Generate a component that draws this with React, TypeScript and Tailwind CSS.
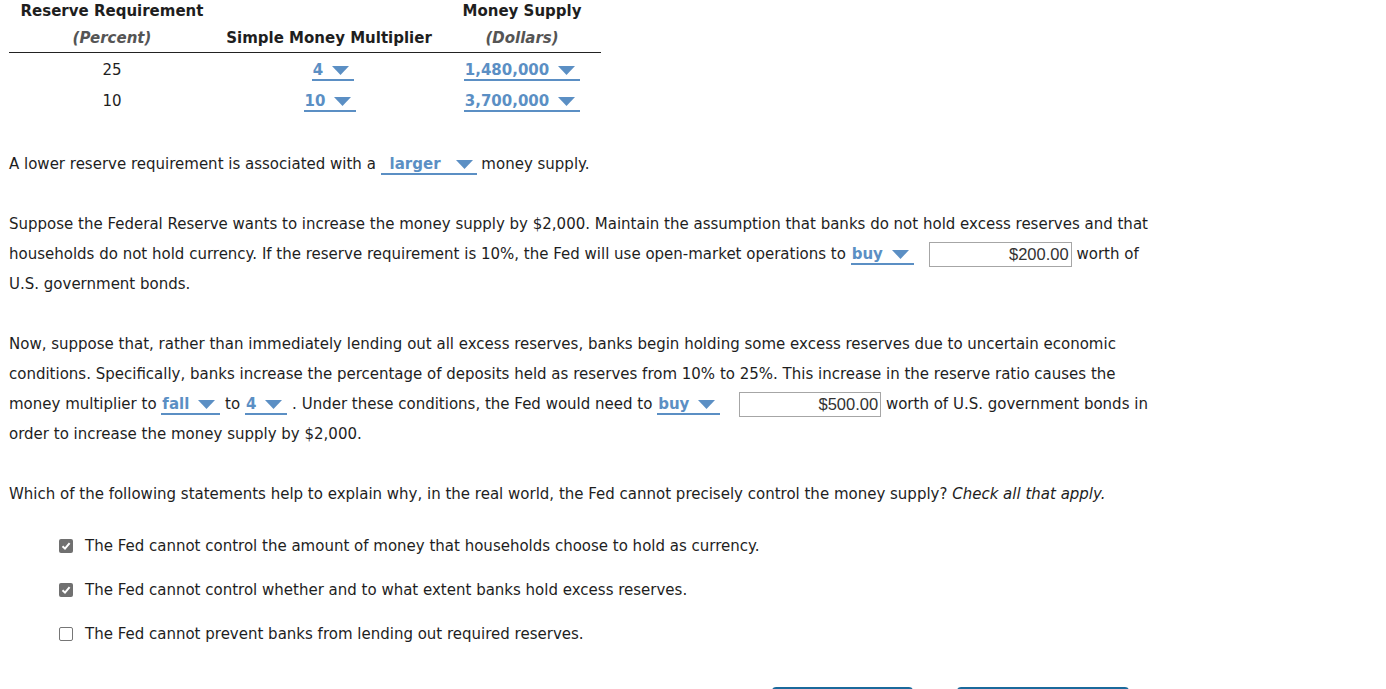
import React from "react";

const Tri = () => (
  <svg width="17" height="9" viewBox="0 0 17 9" className="inline-block">
    <polygon points="0,0 17,0 8.5,9" fill="#5b8fc4" />
  </svg>
);

function DD({ text, pl = "pl-[1px]", gap = "gap-[9px]", pr = "pr-[5px]" }: { text: string; pl?: string; gap?: string; pr?: string }) {
  return (
    <span
      className={`inline-flex items-center ${gap} ${pl} ${pr} border-b-2 border-[#5b8fc4] font-bold text-[#5b8fc4] leading-[18px] align-baseline`}
    >
      <span>{text}</span>
      <Tri />
    </span>
  );
}

function Box({ value, w }: { value: string; w: string }) {
  return (
    <span
      className={`inline-block ${w} h-[25px] border border-[#a6a6a6] text-right pr-[2px] leading-[23px] align-middle text-[#333] text-[16.5px]`}
      style={{ fontFamily: '"Liberation Sans", Arial, sans-serif' }}
    >
      {value}
    </span>
  );
}

function Check({ checked, label }: { checked: boolean; label: string }) {
  return (
    <div className="h-[44px] flex items-center pl-[50px]">
      {checked ? (
        <span className="w-[14px] h-[14px] rounded-[2px] bg-[#707070] flex items-center justify-center">
          <svg width="10" height="10" viewBox="0 0 10 10">
            <path d="M1.5 5.2 L4 7.6 L8.6 2.2" stroke="white" strokeWidth="2" fill="none" />
          </svg>
        </span>
      ) : (
        <span className="w-[14px] h-[14px] rounded-[2px] border border-[#767676] bg-white" />
      )}
      <span className="ml-[12px]">{label}</span>
    </div>
  );
}

export default function App() {
  return (
    <div
      className="w-[1386px] h-[689px] overflow-hidden bg-white text-[#1e1e1e] text-[15px] pl-[9px]"
      style={{ fontFamily: '"DejaVu Sans", Verdana, sans-serif' }}
    >
      {/* Table */}
      <div className="w-[592px]">
        <div className="grid grid-cols-[206px_228px_158px] font-bold pt-[1px]">
          <div className="h-[21px] leading-[21px] text-center">Reserve Requirement</div>
          <div />
          <div className="h-[21px] leading-[21px] text-center">Money Supply</div>
        </div>
        <div className="grid grid-cols-[206px_228px_158px] border-b border-[#222] h-[31px] items-center pt-[2px]">
          <div className="text-center italic font-bold text-[#555]">(Percent)</div>
          <div className="text-center font-bold">Simple Money Multiplier</div>
          <div className="text-center italic font-bold text-[#555]">(Dollars)</div>
        </div>
        <div className="grid grid-cols-[206px_228px_158px] h-[31px] items-center mt-[2px]">
          <div className="text-center">25</div>
          <div className="text-center pl-[8px]"><DD text="4" /></div>
          <div className="text-center"><DD text="1,480,000" /></div>
        </div>
        <div className="grid grid-cols-[206px_228px_158px] h-[31px] items-center">
          <div className="text-center">10</div>
          <div className="text-center pl-[2px]"><DD text="10" /></div>
          <div className="text-center"><DD text="3,700,000" /></div>
        </div>
      </div>

      <p className="mt-[32px] leading-[30px]">
        A lower reserve requirement is associated with a{" "}
        <DD text="larger" pl="pl-[9px]" gap="gap-[15px]" pr="pr-[4px]" /> money supply.
      </p>

      <p className="mt-[30px] leading-[30px]">
        Suppose the Federal Reserve wants to increase the money supply by $2,000. Maintain the assumption that banks do not hold excess reserves and that
        <br />
        households do not hold currency. If the reserve requirement is 10%, the Fed will use open-market operations to <DD text="buy" />{" "}
        <span className="ml-[10px]"><Box value="$200.00" w="w-[143px]" /></span> worth of
        <br />
        U.S. government bonds.
      </p>

      <p className="mt-[30px] leading-[30px]">
        Now, suppose that, rather than immediately lending out all excess reserves, banks begin holding some excess reserves due to uncertain economic
        <br />
        conditions. Specifically, banks increase the percentage of deposits held as reserves from 10% to 25%. This increase in the reserve ratio causes the
        <br />
        money multiplier to <DD text="fall" /> to <DD text="4" gap="gap-[9px]" /> . Under these conditions, the Fed would need to <DD text="buy" />{" "}
        <span className="ml-[14px]"><Box value="$500.00" w="w-[142px]" /></span> worth of U.S. government bonds in
        <br />
        order to increase the money supply by $2,000.
      </p>

      <p className="mt-[30px] leading-[30px]">
        Which of the following statements help to explain why, in the real world, the Fed cannot precisely control the money supply?{" "}
        <span className="italic">Check all that apply.</span>
      </p>

      <div className="mt-[15px]">
        <Check checked label="The Fed cannot control the amount of money that households choose to hold as currency." />
        <Check checked label="The Fed cannot control whether and to what extent banks hold excess reserves." />
        <Check checked={false} label="The Fed cannot prevent banks from lending out required reserves." />
      </div>

      <div className="mt-[31px] flex pl-[763px] gap-[44px]">
        <div className="w-[141px] h-[36px] rounded-[4px] bg-[#1b6a9c]" />
        <div className="w-[172px] h-[36px] rounded-[4px] bg-[#1b6a9c]" />
      </div>
    </div>
  );
}
